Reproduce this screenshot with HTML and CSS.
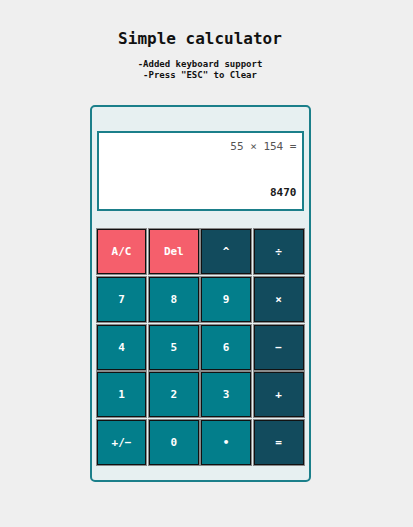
FILE: index.html
```html
<!DOCTYPE html>
<html lang="en">
<head>
    <meta charset="UTF-8">
    <meta name="viewport" content="width=device-width, initial-scale=1.0">
    <title>Simple calculator</title>
    <link rel="stylesheet" href="styles.css">
</head>
<body>

<div class="page">
    <h1 class="title">Simple calculator</h1>
    <p class="notes">-Added keyboard support<br>-Press "ESC" to Clear</p>

    <div class="calculator">
        <div class="display">
            <div class="expression">55 × 154 =</div>
            <div class="result">8470</div>
        </div>

        <div class="keys">
            <button class="key key-clear">A/C</button>
            <button class="key key-clear">Del</button>
            <button class="key key-op">^</button>
            <button class="key key-op">÷</button>

            <button class="key">7</button>
            <button class="key">8</button>
            <button class="key">9</button>
            <button class="key key-op">×</button>

            <button class="key">4</button>
            <button class="key">5</button>
            <button class="key">6</button>
            <button class="key key-op">−</button>

            <button class="key">1</button>
            <button class="key">2</button>
            <button class="key">3</button>
            <button class="key key-op">+</button>

            <button class="key">+/−</button>
            <button class="key">0</button>
            <button class="key">•</button>
            <button class="key key-op">=</button>
        </div>
    </div>
</div>

</body>
</html>
```

FILE: styles.css
```css
body {
    margin: 0;
    background-color: #efefef;
    font-family: "DejaVu Sans Mono", "Liberation Mono", monospace;
    color: #111;
}
.page {
    width: 400px;
    display: flex;
    flex-direction: column;
    align-items: center;
}
.title {
    margin: 29px 0 0;
    font-size: 16px;
    line-height: 20px;
    font-weight: bold;
}
.notes {
    margin: 10px 0 0;
    font-size: 9px;
    line-height: 11px;
    font-weight: bold;
    text-align: center;
}
.calculator {
    margin-top: 24px;
    width: 221px;
    box-sizing: border-box;
    padding: 24px 5px 15px;
    background-color: #e7f0f1;
    border: 2px solid #1b7f8a;
    border-radius: 5px;
}
.display {
    height: 80px;
    box-sizing: border-box;
    padding: 7px 5px 9px;
    background-color: #ffffff;
    border: 2px solid #1b7f8a;
    display: flex;
    flex-direction: column;
    justify-content: space-between;
    align-items: flex-end;
    font-size: 11px;
    line-height: 14px;
}
.expression {
    color: #555;
}
.result {
    font-weight: bold;
    color: #1a1a1a;
}
.keys {
    margin-top: 18px;
    display: grid;
    grid-template-columns: repeat(4, 1fr);
    grid-auto-rows: 45px;
    gap: 2.8px 2.4px;
}
.key {
    font-family: inherit;
    font-size: 11px;
    font-weight: bold;
    color: #ffffff;
    background-color: #037e8b;
    border: 1px solid #111;
    box-shadow: 0 0 0 1px #8a8a8a;
    padding: 0;
    cursor: pointer;
}
.key-clear {
    background-color: #f55f6c;
}
.key-op {
    background-color: #124b5d;
}
```
